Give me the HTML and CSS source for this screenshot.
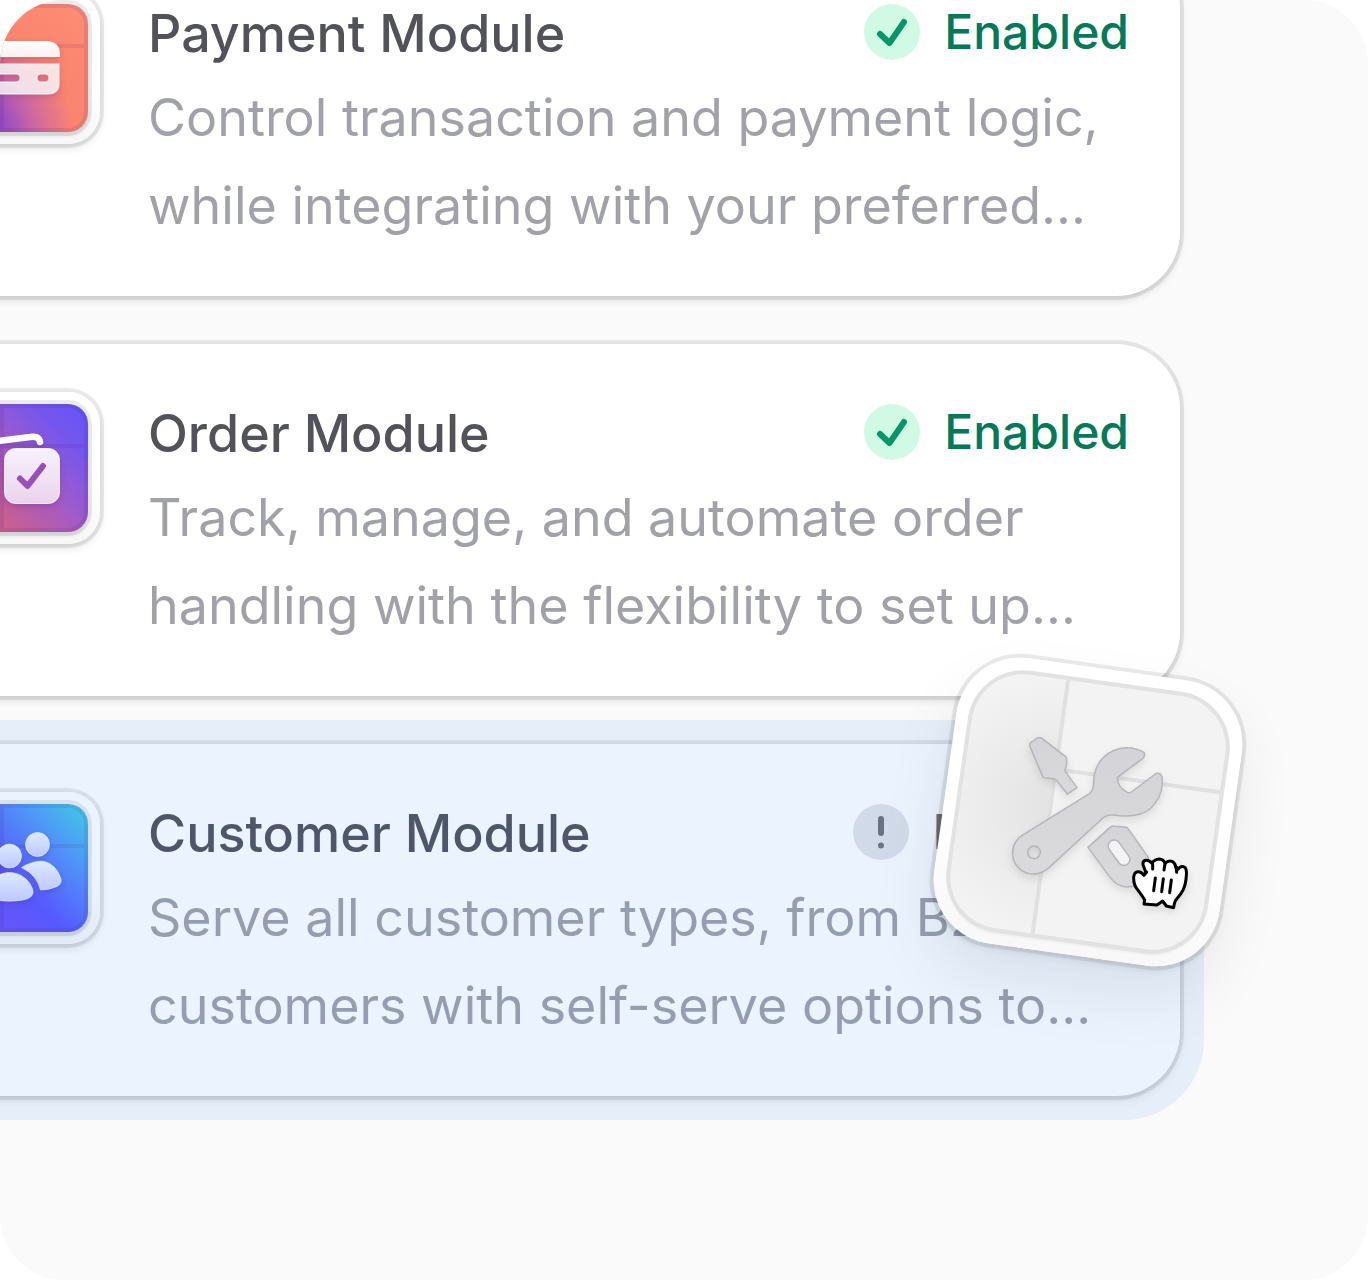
FILE: index.html
```html
<!DOCTYPE html>
<html lang="en">
<head>
    <meta charset="UTF-8">
    <meta name="viewport" content="width=device-width, initial-scale=1.0">
    <title>Modules</title>
    <link rel="stylesheet" href="styles.css">
</head>
<body>
    <main class="stage">
        <div class="modules">
            <article class="card">
                <div class="icon-box">
                    <div class="tile payment">
                        <svg viewBox="0 0 128 128">
                            <defs>
                                <linearGradient id="cardTop" x1="0" y1="0" x2="0" y2="1">
                                    <stop offset="0" stop-color="#fff"/>
                                    <stop offset="1" stop-color="#fff" stop-opacity=".9"/>
                                </linearGradient>
                            </defs>
                            <path d="M28 53V51Q28 37 42 37H86Q100 37 100 51V53Z" fill="url(#cardTop)"/>
                            <path fill-rule="evenodd" d="M29 60H99V79Q99 90 88 90H42Q29 90 29 79ZM40 70a4 4 0 0 0 0 8H56a4 4 0 0 0 0-8ZM81 70a4 4 0 0 0 0 8H85a4 4 0 0 0 0-8Z" fill="#fff" fill-opacity=".8" stroke="#fff" stroke-opacity=".6" stroke-width="1.5"/>
                        </svg>
                    </div>
                </div>
                <div class="content">
                    <div class="card-header">
                        <h2>Payment Module</h2>
                        <div class="status enabled">
                            <svg viewBox="0 0 56 56"><path d="M16 30L25.500 39L40 18"/></svg>
                            <span>Enabled</span>
                        </div>
                    </div>
                    <p>Control transaction and payment logic,<br>while integrating with your preferred…</p>
                </div>
            </article>

            <article class="card">
                <div class="icon-box">
                    <div class="tile order">
                        <svg viewBox="0 0 128 128">
                            <defs>
                                <linearGradient id="boxFill" x1="0" y1="0" x2="0" y2="1">
                                    <stop offset="0" stop-color="#f7f2fd"/>
                                    <stop offset="1" stop-color="#ead3ec"/>
                                </linearGradient>
                            </defs>
                            <path d="M30 38L70 33Q79 31.500 80 38" fill="none" stroke="#fff" stroke-width="6.500" stroke-linecap="round"/>
                            <rect x="44.500" y="44.500" width="55" height="55" rx="11" fill="url(#boxFill)" stroke="#fff" stroke-opacity=".8"/>
                            <path d="M60 74.500L67.500 82L83 62" fill="none" stroke="#9a4fb8" stroke-width="6" stroke-linecap="round" stroke-linejoin="round"/>
                        </svg>
                    </div>
                </div>
                <div class="content">
                    <div class="card-header">
                        <h2>Order Module</h2>
                        <div class="status enabled">
                            <svg viewBox="0 0 56 56"><path d="M16 30L25.500 39L40 18"/></svg>
                            <span>Enabled</span>
                        </div>
                    </div>
                    <p>Track, manage, and automate order<br>handling with the flexibility to set up…</p>
                </div>
            </article>

            <article class="card drop-target">
                <div class="icon-box">
                    <div class="tile customer">
                        <svg viewBox="0 0 128 128">
                            <defs>
                                <linearGradient id="people" x1="0" y1="0" x2="0" y2="1">
                                    <stop offset="0" stop-color="#f1f5ff"/>
                                    <stop offset="1" stop-color="#cdcfff"/>
                                </linearGradient>
                            </defs>
                            <g fill="url(#people)" stroke="#fff" stroke-opacity=".6">
                                <circle cx="77.500" cy="40.500" r="12"/>
                                <circle cx="49.500" cy="52" r="12"/>
                                <path d="M61.500 63.500C74 56 86 54.500 94 63Q99 68 101 75Q102 80 97 82.500Q89 86 80.500 86Q77 71 61.500 63.500Z"/>
                                <path d="M26 87C28 77 38 68.500 49.500 68.500S71 77 73 87Q73.500 92 68 94.500C60 98 39 98 31 94.500Q25.500 92 26 87Z"/>
                            </g>
                        </svg>
                    </div>
                </div>
                <div class="content">
                    <div class="card-header">
                        <h2>Customer Module</h2>
                        <div class="status disabled">
                            <svg viewBox="0 0 56 56"><path d="M28 15V29M28 41.500V41.600"/></svg>
                            <span>Disabled</span>
                        </div>
                    </div>
                    <p>Serve all customer types, from B2B<br>customers with self-serve options to…</p>
                </div>

                <!-- tile being dragged onto the card -->
                <div class="dragged">
                    <div class="dragged-box">
                        <div class="dragged-tile"></div>
                    </div>
                    <svg class="tools" viewBox="-168 -156 864 864">
                        <defs>
                            <linearGradient id="metal" x1="0" y1="0" x2="0" y2="1">
                                <stop offset="0" stop-color="#d4d4d8"/>
                                <stop offset="1" stop-color="#dadadc"/>
                            </linearGradient>
                        </defs>
                        <g fill="url(#metal)" stroke="#b6b6ba" stroke-width="4.500" stroke-linejoin="round" fill-rule="evenodd">
                            <path d="M90 80Q87 72 93 67L112 54Q120 50 126 55L196 109Q201 113 200 120L199 138Q193 150 196 155L231 203L202 222L171 183Q167 177 160 176L137 174Q129 173 127 167Z"/>
                            <path d="M432 97Q405 82 380 83C325 85 282 125 281 185Q281 212 268 221L75 341C48 355 38 375 38 400C38 435 65 462 100 462Q125 462 148 442L302 300Q318 283 340 285C400 293 440 285 465 250C485 225 489 195 486 170Q480 155 466 162L394 216Q388 221 382 217Q352 202 352 172L428 116Q437 107 432 97ZM83 397a19 19 0 0 0 38 0a19 19 0 0 0-38 0Z"/>
                            <path d="M264 382L330 322Q335 317 342 318L376 321Q381 321 384 326L445 412L440 490Q410 501 380 501Q350 498 330 472Z"/>
                            <rect x="339" y="355" width="36" height="86" rx="18" fill="#f3f3f3" transform="rotate(-36 357 398)"/>
                        </g>
                        <g class="hand">
                            <path d="M432 552L434 540C418 510 400 505 401 472C403 452 420 450 432 466L438 458L429 434C427 418 445 416 456 430Q463 418 478 417Q491 418 495 430Q505 420 516 424Q525 428 527 440Q530 443 534 448Q542 436 553 441Q561 446 559 466C557 505 545 520 530 537Q523 545 521 563L499 558L488 543L471 555Z"/>
                            <path d="M438 458L440 456M458 431V447M495 431L492 450M528 441L530 457M466 474L461 512M490 476L485 515M514 480L509 518"/>
                        </g>
                    </svg>
                </div>
            </article>
        </div>
    </main>
</body>
</html>
```
FILE: styles.css
```css
* {
    box-sizing: border-box;
}
body {
    margin: 0;
    background: #fff;
    font-family: Inter, "Liberation Sans", sans-serif;
}
.stage {
    min-height: 100vh;
    padding-right: 188px;
    background: #fafafa;
    border-radius: 64px;
    overflow: hidden;
}
/* the list runs past the top left corner of the stage */
.modules {
    display: flex;
    flex-direction: column;
    gap: 48px;
    margin: -56px 0 0 -100px;
}
.card {
    position: relative;
    display: flex;
    align-items: flex-start;
    gap: 48px;
    padding: 48px 48px 46px;
    background: #fff;
    border-radius: 64px;
    box-shadow: 0 0 0 4px rgba(0, 0, 0, 0.08), 0 4px 8px rgba(0, 0, 0, 0.12);
}
.content {
    flex: 1;
    min-width: 0;
}
.card-header {
    display: flex;
    justify-content: space-between;
    align-items: flex-start;
    height: 82px;
}
h2 {
    margin: 0;
    font-size: 52px;
    line-height: 84px;
    font-weight: 500;
    color: #52525b;
}
p {
    margin: 0;
    font-size: 52px;
    line-height: 88px;
    color: #a1a1aa;
    white-space: nowrap;
}

/* status */
.status {
    display: flex;
    align-items: center;
    gap: 24px;
    font-size: 48px;
    line-height: 80px;
    font-weight: 500;
}
.status svg {
    width: 56px;
    height: 56px;
    border-radius: 50%;
    fill: none;
    stroke-width: 6;
    stroke-linecap: round;
    stroke-linejoin: round;
}
.enabled {
    padding-right: 3px;
    color: #047857;
}
.enabled svg {
    background: #d1fae5;
    stroke: #059669;
}
.disabled {
    color: #71717a;
}
.disabled svg {
    background: #e4e4e7;
    stroke: #71717a;
}

/* module icons */
.icon-box {
    flex: none;
    width: 152px;
    padding: 12px;
    border-radius: 32px;
    background: linear-gradient(#fff 60%, #f7f7f7);
    box-shadow: 0 0 0 4px rgba(0, 0, 0, 0.08), 0 4px 8px rgba(0, 0, 0, 0.12);
}
.tile {
    position: relative;
    height: 128px;
    border-radius: 20px;
    box-shadow: 0 0 0 4px rgba(0, 0, 0, 0.08), 0 4px 4px rgba(0, 0, 0, 0.08);
}
.tile::before {
    content: "";
    position: absolute;
    inset: 0;
    border: 4px solid rgba(60, 20, 120, 0.1);
    border-radius: 20px;
    background:
        linear-gradient(rgba(60, 20, 120, 0.1), rgba(60, 20, 120, 0.1)) 36px 0 / 4px 100% no-repeat,
        linear-gradient(rgba(60, 20, 120, 0.1), rgba(60, 20, 120, 0.1)) 40px 36px / 80px 4px no-repeat;
    background-origin: padding-box;
    background-clip: padding-box;
}
.tile svg {
    position: relative;
    display: block;
    width: 128px;
    height: 128px;
    filter: drop-shadow(0 3px 3px rgba(60, 20, 100, 0.2));
}
.payment {
    background: radial-gradient(circle at 10% 100%, #7c3aed, #a152bc 22%, #cf68a0 36%, #f9846f 58%, #ff8d75);
}
.order {
    background: linear-gradient(45deg, #e0607a, #c95f90 22%, #a45bc6 50%, #7656ec 78%, #6355fa);
}
.customer {
    background: linear-gradient(45deg, #7c4df5, #5b54ff 42%, #5590fa 70%, #45cce5 96%);
}

/* drop highlight */
.drop-target::after {
    content: "";
    position: absolute;
    inset: -24px;
    border-radius: 80px;
    background: rgba(50, 135, 250, 0.1);
}
.dragged {
    position: absolute;
    z-index: 1;
    top: -76px;
    right: -52px;
    width: 288px;
    height: 288px;
}
.dragged-box {
    height: 288px;
    padding: 16px;
    border-radius: 64px;
    background: linear-gradient(#fff 50%, #f8f8f8);
    box-shadow: 0 0 0 4px rgba(0, 0, 0, 0.08), 0 4px 8px rgba(0, 0, 0, 0.08), 0 32px 64px rgba(0, 0, 0, 0.08);
    transform: rotate(8deg);
}
.dragged-tile {
    height: 256px;
    border-radius: 52px;
    background:
        linear-gradient(#e0e0e0, #e0e0e0) 88px 0 / 4px 100% no-repeat,
        linear-gradient(#e0e0e0, #e0e0e0) 92px 88px / 164px 4px no-repeat,
        radial-gradient(circle at 88px 128px, #e3e3e3, #f3f3f3 128px) 0 0 / 88px 100% no-repeat,
        #f3f3f3;
    box-shadow: 0 0 0 4px #e2e2e2, 0 4px 4px rgba(0, 0, 0, 0.12);
}
.tools {
    position: absolute;
    inset: 0;
    width: 288px;
    height: 288px;
    filter: drop-shadow(0 4px 4px rgba(0, 0, 0, 0.1));
}
.hand path {
    fill: #fff;
    stroke: #000;
    stroke-width: 9;
    stroke-linecap: round;
    stroke-linejoin: round;
}
```
